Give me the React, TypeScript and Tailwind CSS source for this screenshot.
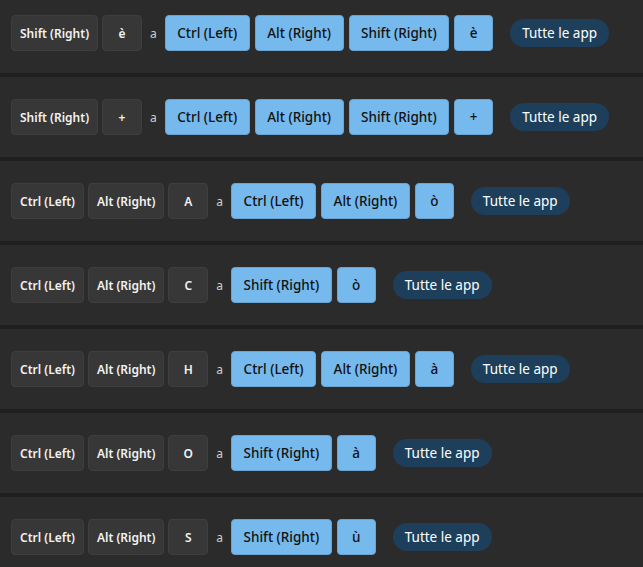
import React from "react";

type Row = { from: string[]; to: string[] };

const rows: Row[] = [
  { from: ["Shift (Right)", "è"], to: ["Ctrl (Left)", "Alt (Right)", "Shift (Right)", "è"] },
  { from: ["Shift (Right)", "+"], to: ["Ctrl (Left)", "Alt (Right)", "Shift (Right)", "+"] },
  { from: ["Ctrl (Left)", "Alt (Right)", "A"], to: ["Ctrl (Left)", "Alt (Right)", "ò"] },
  { from: ["Ctrl (Left)", "Alt (Right)", "C"], to: ["Shift (Right)", "ò"] },
  { from: ["Ctrl (Left)", "Alt (Right)", "H"], to: ["Ctrl (Left)", "Alt (Right)", "à"] },
  { from: ["Ctrl (Left)", "Alt (Right)", "O"], to: ["Shift (Right)", "à"] },
  { from: ["Ctrl (Left)", "Alt (Right)", "S"], to: ["Shift (Right)", "ù"] },
];

function DarkKey({ label }: { label: string }) {
  return (
    <div className="h-[36px] min-w-[40px] px-[8px] pt-[1px] flex items-center justify-center rounded-[4px] bg-[#373737] border border-[#3e3e3e] text-[12px] font-semibold text-[#f2f2f2] whitespace-nowrap">
      {label}
    </div>
  );
}

function BlueKey({ label }: { label: string }) {
  return (
    <div className="h-[36px] min-w-[39px] px-[11.5px] pt-[1px] flex items-center justify-center rounded-[4px] bg-[#76b9ed] border border-[#6aa4d2] text-[13.5px] font-medium text-[#111111] whitespace-nowrap">
      {label}
    </div>
  );
}

export default function App() {
  return (
    <div
      className="w-[643px] h-[567px] overflow-hidden bg-[#1f1f1f]"
      style={{ fontFamily: '"Noto Sans", "Open Sans", sans-serif' }}
    >
      <div className="-mt-[7px] flex flex-col gap-[4px]">
        {rows.map((r, i) => (
          <div key={i} className="h-[80px] shrink-0 bg-[#2b2b2b] flex items-center pl-[11px]">
            <div className="flex items-center gap-[4px]">
              {r.from.map((k, j) => (
                <DarkKey key={j} label={k} />
              ))}
            </div>
            <span className="mx-[8px] pt-[2px] text-[12px] text-[#cfcfcf]">a</span>
            <div className="flex items-center gap-[5px]">
              {r.to.map((k, j) => (
                <BlueKey key={j} label={k} />
              ))}
            </div>
            <div className="ml-[17px] h-[28px] px-[12px] pt-[1px] flex items-center rounded-full bg-[#1e3f5b] text-[13.5px] text-white whitespace-nowrap">
              Tutte le app
            </div>
          </div>
        ))}
      </div>
    </div>
  );
}
